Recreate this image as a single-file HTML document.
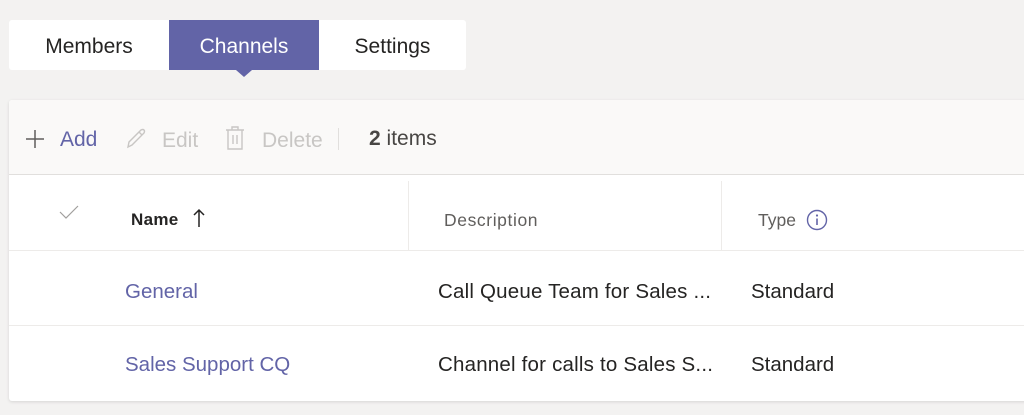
<!DOCTYPE html>
<html><head><style>
*{margin:0;padding:0;box-sizing:border-box}
body{width:1024px;height:415px;background:#f3f2f1;font-family:"Liberation Sans",sans-serif;position:relative;overflow:hidden;color:#252423}
.abs{position:absolute;white-space:nowrap}
.tabs{position:absolute;left:9px;top:20px;width:457px;height:50px;background:#fff;border-radius:3px}
.tab{position:absolute;top:2px;height:50px;line-height:50px;font-size:21px;text-align:center}
.card{position:absolute;left:9px;top:100px;width:1030px;height:301px;background:#fff;border-radius:3px;box-shadow:0 1px 3px rgba(0,0,0,.12);overflow:hidden}
.tb{position:absolute;left:0;top:0;width:100%;height:75px;background:#faf9f8;border-bottom:1px solid #e1dfdd}
.hl{position:absolute;left:0;width:100%;height:1px;background:#edebe9}
.vl{position:absolute;top:81px;width:1px;height:69px;background:#edebe9}
.r{font-size:20.5px}
</style></head><body>
<div class="tabs">
 <div class="tab" style="left:0;width:160px">Members</div>
 <div class="tab" style="left:160px;width:150px;top:0;padding-top:2px;background:#6264a7;color:#fff">Channels</div>
 <div class="tab" style="left:310px;width:147px">Settings</div>
</div>
<div class="abs" style="left:236px;top:70px;width:0;height:0;border-left:8px solid transparent;border-right:8px solid transparent;border-top:7px solid #6264a7"></div>
<div class="card">
 <div class="tb">
  <svg class="abs" style="left:16px;top:29px" width="20" height="20" viewBox="0 0 20 20"><path d="M10 1V19M1 10H19" stroke="#605e5c" stroke-width="1.5"/></svg>
  <div class="abs" style="left:51px;top:28px;font-size:21px;color:#6264a7">Add</div>
  <svg class="abs" style="left:115px;top:26px" width="24" height="24" viewBox="0 0 24 24"><path d="M4 21L5 16L17 4Q19 3 20 4Q21 5 20 7L8 19Z M15 6L18 9" fill="none" stroke="#c8c6c4" stroke-width="1.4"/></svg>
  <div class="abs" style="left:153px;top:29px;font-size:21px;color:#c8c6c4">Edit</div>
  <svg class="abs" style="left:215px;top:25px" width="22" height="26" viewBox="0 0 22 26"><path d="M2 5H20M8 5V2H14V5M4 5V24H18V5M9 10V19M13 10V19" fill="none" stroke="#c8c6c4" stroke-width="1.4"/></svg>
  <div class="abs" style="left:253px;top:29px;font-size:21px;color:#c8c6c4">Delete</div>
  <div class="abs" style="left:329px;top:28px;width:1px;height:22px;background:#e1dfdd"></div>
  <div class="abs" style="left:360px;top:27px;font-size:21px;color:#484644"><b>2</b> items</div>
 </div>
 <svg class="abs" style="left:50px;top:105px" width="20" height="14" viewBox="0 0 20 14"><path d="M1 7L7 13L19 1" fill="none" stroke="#a19f9d" stroke-width="1.2"/></svg>
 <div class="abs" style="left:122px;top:110px;font-size:17px;font-weight:bold;letter-spacing:.3px">Name</div>
 <svg class="abs" style="left:183px;top:108px" width="14" height="20" viewBox="0 0 14 20"><path d="M7 2V19M2 7L7 2L12 7" fill="none" stroke="#252423" stroke-width="1.5"/></svg>
 <div class="vl" style="left:399px"></div>
 <div class="abs" style="left:435px;top:110px;font-size:17.5px;color:#605e5c;letter-spacing:.6px">Description</div>
 <div class="vl" style="left:712px"></div>
 <div class="abs" style="left:749px;top:110px;font-size:17.5px;color:#605e5c">Type</div>
 <svg class="abs" style="left:797px;top:109px" width="22" height="22" viewBox="0 0 22 22"><circle cx="11" cy="11" r="9.5" fill="none" stroke="#6264a7" stroke-width="1.4"/><circle cx="11" cy="6.5" r="1.1" fill="#6264a7"/><path d="M11 9.5V16" stroke="#6264a7" stroke-width="1.6"/></svg>
 <div class="hl" style="top:150px"></div>
 <div class="abs r" style="left:116px;top:180px;color:#6264a7">General</div>
 <div class="abs r" style="left:429px;top:180px;letter-spacing:.2px">Call Queue Team for Sales ...</div>
 <div class="abs r" style="left:742px;top:180px">Standard</div>
 <div class="hl" style="top:225px"></div>
 <div class="abs r" style="left:116px;top:253px;color:#6264a7">Sales Support CQ</div>
 <div class="abs r" style="left:429px;top:253px;letter-spacing:.2px">Channel for calls to Sales S...</div>
 <div class="abs r" style="left:742px;top:253px">Standard</div>
</div>
</body></html>
